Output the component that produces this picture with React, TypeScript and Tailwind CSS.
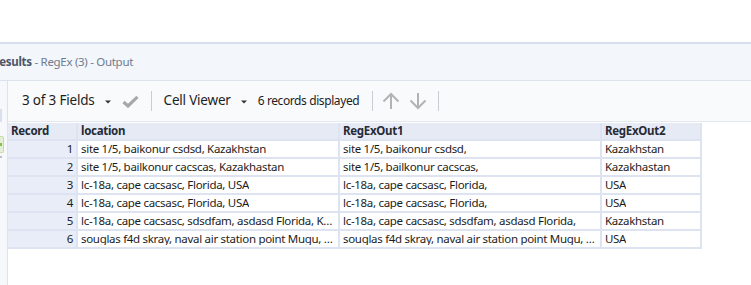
import React from "react";

const rows = [
  ["1", "site 1/5, baikonur csdsd, Kazakhstan", "site 1/5, baikonur csdsd,", "Kazakhstan"],
  ["2", "site 1/5, bailkonur cacscas, Kazakhastan", "site 1/5, bailkonur cacscas,", "Kazakhastan"],
  ["3", "lc-18a, cape cacsasc, Florida, USA", "lc-18a, cape cacsasc, Florida,", "USA"],
  ["4", "lc-18a, cape cacsasc, Florida, USA", "lc-18a, cape cacsasc, Florida,", "USA"],
  ["5", "lc-18a, cape cacsasc, sdsdfam, asdasd Florida, Kazakhstan", "lc-18a, cape cacsasc, sdsdfam, asdasd Florida,", "Kazakhstan"],
  ["6", "souglas f4d skray, naval air station point Mugu, California, USA", "souglas f4d skray, naval air station point Mugu, California,", "USA"],
];

function Caret() {
  return (
    <svg width="8" height="5" viewBox="0 0 8 5" className="mt-[2px]">
      <path d="M1 0.5 L4 3.5 L7 0.5 Z" fill="#333" />
    </svg>
  );
}

function Sep() {
  return <div className="w-px h-[20px] bg-[#c9ccd2]" />;
}

export default function App() {
  return (
    <div className="w-[751px] h-[285px] bg-white overflow-hidden flex flex-col font-['Noto_Sans',sans-serif]">
      <div className="h-[42px] shrink-0 bg-white" />
      <div className="h-[38px] shrink-0 border-t-2 border-[#d7dfec] bg-[#f3f6fb] flex items-center text-[11.5px] tracking-[-0.3px] leading-none">
        <span className="ml-[-8px] font-bold text-[#4a5568]">Results</span>
        <span className="text-[#6f7c8f] whitespace-pre"> - RegEx (3) - Output</span>
      </div>
      <div className="flex flex-1 border-t border-[#dde3ee]">
        <div className="w-[8px] shrink-0 border-r border-[#dde3ee] bg-[#f6f8fb] flex flex-col">
          <div className="h-[28px]" />
          <div className="h-[13px] w-[2px] bg-[#d9dfeb]" />
          <div className="h-[14px]" />
          <div className="h-[17px] w-[4px] rounded-r-[2px] bg-[#e3efd6] border border-l-0 border-[#c5dca8] flex items-center">
            <div className="w-[2px] h-[3px] bg-[#8bbd4f]" />
          </div>
          <div className="h-[3px]" />
          <div className="h-[2px] w-[2px] bg-[#b8bec8]" />
        </div>
        <div className="flex-1 flex flex-col">
          <div className="h-[41px] shrink-0 bg-[#f9fafc] border-b border-[#e3e7ee] flex items-center pl-[14px] text-[13.5px] tracking-[-0.2px] text-[#1e1e1e] leading-none">
            <span>3 of 3 Fields</span>
            <span className="ml-[9px]"><Caret /></span>
            <svg width="17" height="13" viewBox="0 0 17 13" className="ml-[10px]">
              <path d="M1.5 7 L6 11 L15.5 1.8" fill="none" stroke="#a8a8a8" strokeWidth="3.2" strokeLinejoin="miter" />
            </svg>
            <div className="ml-[12px]"><Sep /></div>
            <span className="ml-[12px]">Cell Viewer</span>
            <span className="ml-[9px]"><Caret /></span>
            <span className="ml-[10px] text-[12px] tracking-[-0.4px]">6 records displayed</span>
            <div className="ml-[13px]"><Sep /></div>
            <svg width="18" height="18" viewBox="0 0 18 18" className="ml-[9px]">
              <path d="M9 17 V2.2 M1.5 9.5 L9 2 L16.5 9.5" fill="none" stroke="#b3b3b3" strokeWidth="2" />
            </svg>
            <svg width="18" height="18" viewBox="0 0 18 18" className="ml-[9px]">
              <path d="M9 1 V15.8 M1.5 8.5 L9 16 L16.5 8.5" fill="none" stroke="#b3b3b3" strokeWidth="2" />
            </svg>
            <div className="ml-[11px]"><Sep /></div>
          </div>
          <div className="flex-1 bg-white pt-[1px]">
            <div className="w-fit grid grid-cols-[68px_260px_260px_98px] gap-[2px] pr-[2px] pb-[2px] bg-[#dde3f0] text-[11.5px] tracking-[-0.3px] leading-none text-[#1c1c1c]">
              {["Record", "location", "RegExOut1", "RegExOut2"].map((h) => (
                <div key={h} className="h-[16px] bg-[#e5eaf5] flex items-center pl-[3px] font-bold text-[#262b35]">
                  {h}
                </div>
              ))}
              {rows.map((r) => (
                <React.Fragment key={r[0]}>
                  <div className="h-[16px] bg-[#e9edf7] flex items-center justify-end pr-[3px]">{r[0]}</div>
                  <div className="h-[16px] bg-white flex items-center pl-[3px] pr-[3px] overflow-hidden">
                    <span className="truncate">{r[1]}</span>
                  </div>
                  <div className="h-[16px] bg-white flex items-center pl-[3px] pr-[3px] overflow-hidden">
                    <span className="truncate">{r[2]}</span>
                  </div>
                  <div className="h-[16px] bg-white flex items-center pl-[3px] overflow-hidden">
                    <span className="truncate">{r[3]}</span>
                  </div>
                </React.Fragment>
              ))}
            </div>
          </div>
        </div>
      </div>
    </div>
  );
}
